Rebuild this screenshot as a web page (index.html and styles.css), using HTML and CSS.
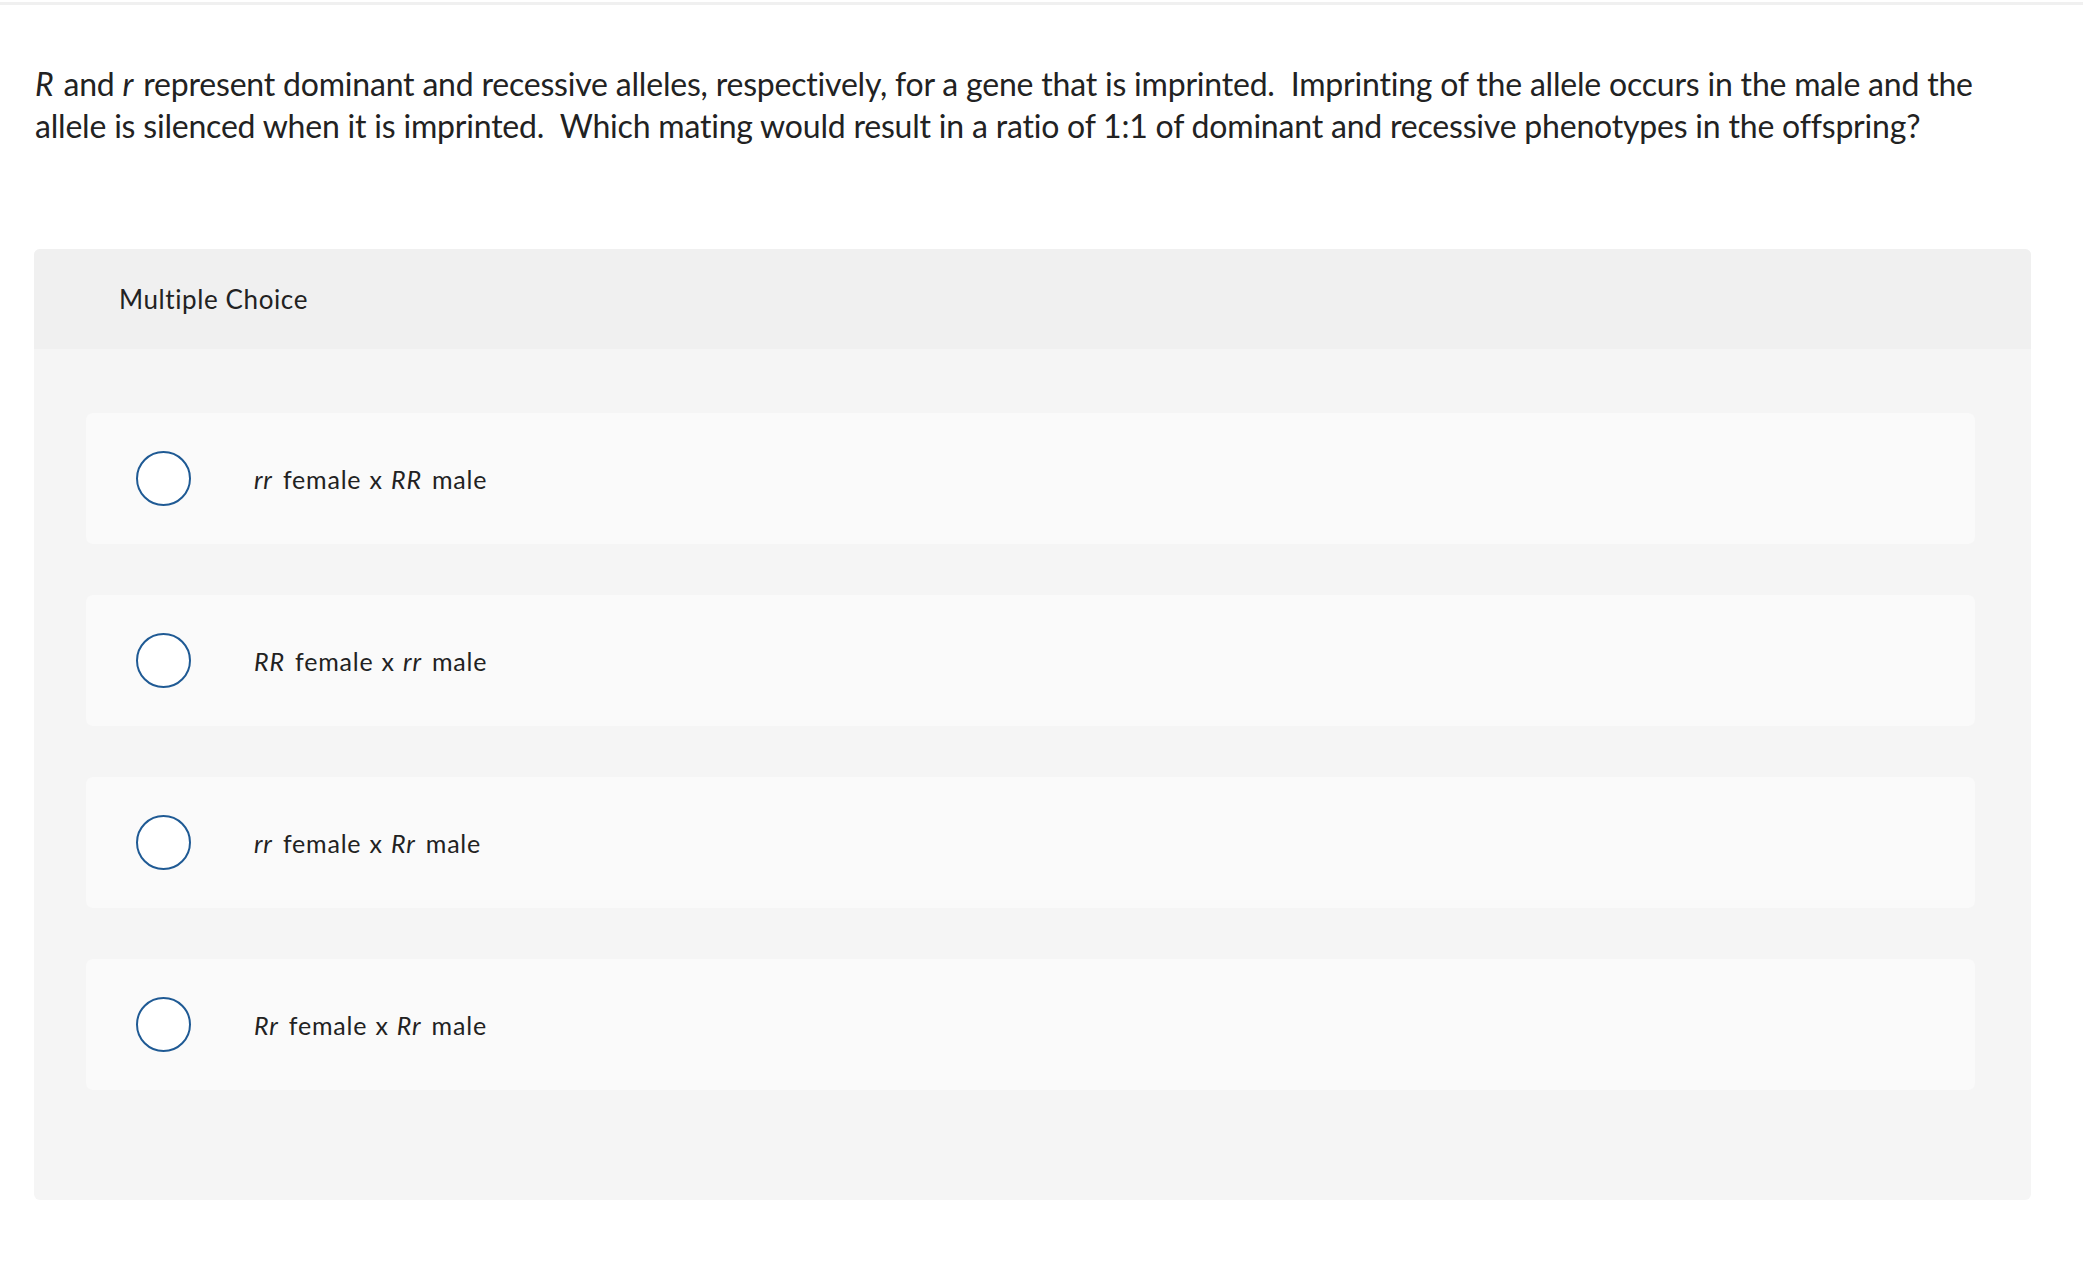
FILE: index.html
```html
<!DOCTYPE html>
<html lang="en">
<head>
<meta charset="utf-8">
<title>Multiple Choice</title>
<link rel="stylesheet" href="styles.css">
</head>
<body>
<div class="topline"></div>
<p class="question"><i>R</i> and <i>r</i> represent dominant and recessive alleles, respectively, for a gene that is imprinted.&nbsp; Imprinting of the allele occurs in the male and the allele is silenced when it is imprinted.&nbsp; Which mating would result in a ratio of 1:1 of dominant and recessive phenotypes in the offspring?</p>
<section class="panel">
  <div class="panel-head">Multiple Choice</div>
  <div class="panel-body">
    <div class="option"><span class="radio"></span><span class="label"><i>rr</i> female x <i>RR</i> male</span></div>
    <div class="option"><span class="radio"></span><span class="label"><i>RR</i> female x <i>rr</i> male</span></div>
    <div class="option"><span class="radio"></span><span class="label"><i>rr</i> female x <i>Rr</i> male</span></div>
    <div class="option"><span class="radio"></span><span class="label"><i>Rr</i> female x <i>Rr</i> male</span></div>
  </div>
</section>
</body>
</html>
```
FILE: styles.css
```css
html, body {
  margin: 0;
  padding: 0;
  background: #ffffff;
}
body {
  font-family: "Lato", "Liberation Sans", sans-serif;
  color: #222222;
  width: 2083px;
}
.topline {
  margin-top: 2px;
  height: 3px;
  background: #f0f0f0;
}
.question {
  margin: 58px 52px 0 35px;
  font-size: 32px;
  line-height: 42px;
  letter-spacing: -0.2px;
  color: #222222;
}
.question i {
  font-style: italic;
  padding-right: 2px;
}
.panel {
  margin: 102px 52px 0 34px;
  width: 1997px;
  background: #f5f5f5;
  border-radius: 6px;
  overflow: hidden;
}
.panel-head {
  height: 100px;
  background: #f0f0f0;
  display: flex;
  align-items: center;
  padding-left: 85px;
  font-size: 26px;
  letter-spacing: 0.6px;
  color: #222222;
}
.panel-body {
  padding: 64px 56px 110px 52px;
  display: flex;
  flex-direction: column;
  gap: 51px;
}
.option {
  height: 131px;
  background: #fafafa;
  border-radius: 7px;
  display: flex;
  align-items: center;
  padding-left: 50px;
}
.radio {
  width: 51px;
  height: 51px;
  border: 2px solid #1f5a94;
  border-radius: 50%;
  background: #ffffff;
  flex: none;
}
.label {
  margin-left: 63px;
  font-size: 25px;
  letter-spacing: 0.8px;
  word-spacing: 1px;
  color: #222222;
}
.label i {
  padding-right: 2px;
}
```
